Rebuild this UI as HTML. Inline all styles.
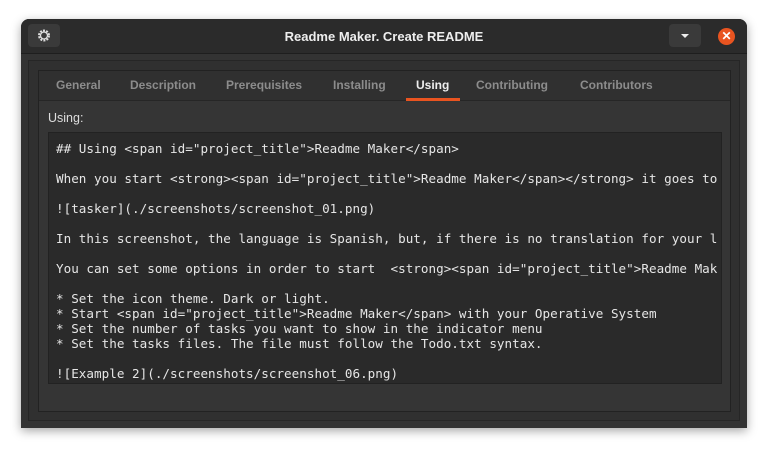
<!DOCTYPE html>
<html><head><style>
*{margin:0;padding:0;box-sizing:border-box}
body{width:768px;height:452px;background:#fff;position:relative;overflow:hidden;font-family:"Liberation Sans",sans-serif}
.win{position:absolute;left:21px;top:19px;width:726px;height:409px;background:#333;border-radius:8px 8px 0 0;box-shadow:0 3px 10px rgba(0,0,0,.35);overflow:hidden}
.hdr{position:absolute;left:0;top:0;right:0;height:35px;background:#2b2b2b;border-bottom:1px solid #1e1e1e}
.btn{position:absolute;top:5px;width:32px;height:23px;background:#3a3a3a;border-radius:4px}
.title{position:absolute;left:0;right:0;top:10px;text-align:center;color:#eee;font-weight:bold;font-size:13px}
.close{position:absolute;left:697px;top:9px;width:17px;height:17px;border-radius:50%;background:#e95420;color:#fff;font-size:12px;text-align:center;line-height:17px;font-weight:bold}
.frame{position:absolute;left:7px;top:41px;width:712px;height:361px;border:1px solid #262626;background:#303030}
.nb{position:absolute;left:9px;top:9px;width:693px;height:342px;border:1px solid #222;background:#353535}
.tabs{position:absolute;left:0;top:0;right:0;height:30px;background:#303030;border-bottom:1px solid #262626}
.tab{position:absolute;top:7px;font-size:12px;font-weight:bold;color:#8c8c8c}
.tab.a{color:#eee}
.ul{position:absolute;left:367px;top:27px;width:54px;height:3px;background:#e95420}
.lbl{position:absolute;left:9px;top:40px;color:#ddd;font-size:12.5px}
.tv{position:absolute;left:9px;top:61px;width:674px;height:252px;background:#2a2a2a;border:1px solid #222;overflow:hidden}
pre{position:absolute;left:7px;top:8px;font-family:"DejaVu Sans Mono","Liberation Mono",monospace;font-size:12.6px;line-height:15px;color:#e6e6e6;white-space:pre;letter-spacing:0.02px}
</style></head><body>
<div class="win">
 <div class="hdr">
  <div class="btn" style="left:7px"><svg width="32" height="23"><circle cx="16" cy="11.5" r="5" fill="none" stroke="#ddd" stroke-width="2" stroke-dasharray="2 1.2"/><circle cx="16" cy="11.5" r="3.5" fill="none" stroke="#ddd" stroke-width="1.3"/></svg></div>
  <div class="title">Readme Maker. Create README</div>
  <div class="btn" style="left:648px"><svg width="32" height="23"><path d="M12 10h8l-4 4z" fill="#eee"/></svg></div>
  <div class="close">✕</div>
 </div>
 <div class="frame"><div class="nb">
  <div class="tabs">
   <span class="tab" style="left:17px">General</span>
   <span class="tab" style="left:91px">Description</span>
   <span class="tab" style="left:187px">Prerequisites</span>
   <span class="tab" style="left:294px">Installing</span>
   <span class="tab a" style="left:377px">Using</span>
   <span class="tab" style="left:437px">Contributing</span>
   <span class="tab" style="left:541px">Contributors</span>
   <div class="ul"></div>
  </div>
  <div class="lbl">Using:</div>
  <div class="tv"><pre>## Using &lt;span id="project_title"&gt;Readme Maker&lt;/span&gt;

When you start &lt;strong&gt;&lt;span id="project_title"&gt;Readme Maker&lt;/span&gt;&lt;/strong&gt; it goes to

![tasker](./screenshots/screenshot_01.png)

In this screenshot, the language is Spanish, but, if there is no translation for your l

You can set some options in order to start  &lt;strong&gt;&lt;span id="project_title"&gt;Readme Mak

* Set the icon theme. Dark or light.
* Start &lt;span id="project_title"&gt;Readme Maker&lt;/span&gt; with your Operative System
* Set the number of tasks you want to show in the indicator menu
* Set the tasks files. The file must follow the Todo.txt syntax.

![Example 2](./screenshots/screenshot_06.png)</pre></div>
 </div></div>
</div>
</body></html>
